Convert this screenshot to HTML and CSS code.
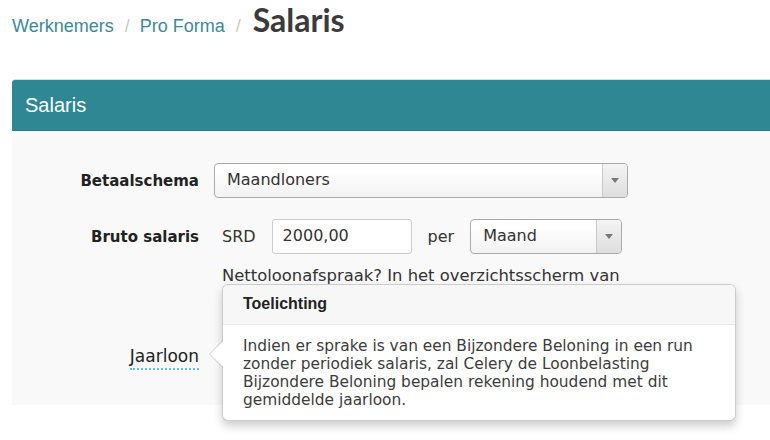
FILE: index.html
```html
<!DOCTYPE html>
<html lang="nl">
<head>
<meta charset="utf-8">
<title>Salaris</title>
<link rel="stylesheet" href="styles.css">
</head>
<body>
<div class="crumbs">
  <a class="crumb" href="#">Werknemers</a>
  <span class="sep">/</span>
  <a class="crumb" href="#">Pro Forma</a>
  <span class="sep">/</span>
  <h1 class="title">Salaris</h1>
</div>

<section class="panel">
  <div class="panel-heading">Salaris</div>
  <div class="panel-body">
    <div class="row">
      <label class="label">Betaalschema</label>
      <div class="controls">
        <div class="select select-wide">
          <span class="select-text">Maandloners</span>
          <span class="select-arrow"><span class="tri"></span></span>
        </div>
      </div>
    </div>
    <div class="row row-salary">
      <label class="label">Bruto salaris</label>
      <div class="controls">
        <span class="unit">SRD</span>
        <div class="input">2000,00</div>
        <span class="per">per</span>
        <div class="select select-small">
          <span class="select-text">Maand</span>
          <span class="select-arrow"><span class="tri"></span></span>
        </div>
      </div>
    </div>
    <div class="row row-help">
      <span class="label"></span>
      <p class="help">Nettoloonafspraak? In het overzichtsscherm van</p>
    </div>
    <div class="row row-year">
      <span class="label"><span class="hint">Jaarloon</span></span>
      <div class="controls"></div>
      <div class="popover">
        <span class="arrow"></span>
        <div class="popover-title">Toelichting</div>
        <div class="popover-content">Indien er sprake is van een Bijzondere Beloning in een run zonder periodiek salaris, zal Celery de Loonbelasting Bijzondere Beloning bepalen rekening houdend met dit gemiddelde jaarloon.</div>
      </div>
    </div>
  </div>
</section>
</body>
</html>
```

FILE: styles.css
```css
html, body {
  margin: 0;
  padding: 0;
  background: #fff;
}
body {
  font-family: "DejaVu Sans", Verdana, sans-serif;
  font-size: 16px;
  color: #333;
  min-height: 440px;
}

.crumbs {
  display: flex;
  align-items: baseline;
  padding: 0 0 0 12px;
  height: 79px;
  box-sizing: border-box;
}
.crumb {
  font-family: "Liberation Sans", Arial, sans-serif;
  font-size: 18px;
  color: #3a8a99;
  text-decoration: none;
}
.sep {
  font-family: "Liberation Sans", Arial, sans-serif;
  font-size: 18px;
  color: #c8c8c8;
  margin: 0 10px 0 11px;
}
.title {
  margin: 0 0 0 2px;
  font-family: Lato, "Open Sans", sans-serif;
  font-weight: 700;
  font-size: 32px;
  line-height: normal;
  color: #3b3b3b;
}

.panel {
  margin-left: 12px;
  border-top: 1px solid #dcdcdc;
  border-radius: 4px 0 0 0;
}
.panel-heading {
  background: #2e8793;
  color: #fff;
  font-family: "Liberation Sans", Arial, sans-serif;
  font-size: 20px;
  height: 50px;
  line-height: 50px;
  padding-left: 13px;
  border-radius: 3px 0 0 0;
  border-bottom: 1px solid #2a7984;
}
.panel-body {
  background: #f9f9f9;
  padding: 32px 0 0 0;
  height: 242px;
}

.row {
  display: grid;
  grid-template-columns: 187px 1fr;
  column-gap: 15px;
  align-items: center;
  position: relative;
}
.row-salary {
  margin-top: 21px;
}
.label {
  text-align: right;
  font-weight: 700;
  font-size: 15px;
  color: #222;
}
.controls {
  display: flex;
  align-items: center;
}

.select {
  display: flex;
  height: 35px;
  box-sizing: border-box;
  border: 1px solid #aaa;
  border-radius: 4px;
  background: linear-gradient(#fff 20%, #fafafa 50%, #f2f2f2 100%);
  overflow: hidden;
}
.select-wide { width: 414px; }
.select-small { width: 152px; }
.select-text {
  flex: 1;
  padding-left: 12px;
  line-height: 32px;
  color: #333;
}
.select-arrow {
  width: 24px;
  border-left: 1px solid #c8c8c8;
  background: linear-gradient(#f4f4f4, #dedede);
  display: flex;
  align-items: center;
  justify-content: center;
}
.tri {
  width: 0;
  height: 0;
  border-left: 4px solid transparent;
  border-right: 4px solid transparent;
  border-top: 5px solid #777;
}

.unit {
  margin-left: 8px;
  margin-right: 16px;
}
.input {
  width: 140px;
  height: 35px;
  box-sizing: border-box;
  border: 1px solid #ccc;
  border-radius: 3px;
  background: #fff;
  padding-left: 10px;
  line-height: 32px;
}
.per {
  margin-left: 16px;
  margin-right: 16px;
}

.row-help {
  margin-top: 12px;
}
.help {
  margin: 0 0 0 8px;
  font-size: 16.4px;
  line-height: 20px;
  color: #333;
}

.row-year {
  margin-top: 60px;
}
.hint {
  font-weight: 400;
  font-size: 17px;
  line-height: 20px;
  color: #222;
  border-bottom: 2px dotted #5fc4c8;
  padding-bottom: 2px;
}

.popover {
  position: absolute;
  left: 210px;
  top: -62px;
  width: 514px;
  height: 137px;
  box-sizing: border-box;
  background: #fff;
  border: 1px solid rgba(0, 0, 0, 0.2);
  border-radius: 6px;
  box-shadow: 0 5px 10px rgba(0, 0, 0, 0.2);
  z-index: 2;
}
.popover-title {
  font-family: "Liberation Sans", Arial, sans-serif;
  font-weight: 700;
  font-size: 16px;
  color: #222;
  background: #f7f7f7;
  border-bottom: 1px solid #ebebeb;
  border-radius: 5px 5px 0 0;
  height: 39px;
  line-height: 38px;
  padding-left: 20px;
}
.popover-content {
  padding: 12px 20px 0 20px;
  font-size: 15.4px;
  line-height: 18px;
  color: #3c3c3c;
}
.arrow {
  position: absolute;
  left: -14px;
  top: 55px;
  width: 0;
  height: 0;
  border-top: 14px solid transparent;
  border-bottom: 14px solid transparent;
  border-right: 14px solid rgba(0, 0, 0, 0.18);
}
.arrow::after {
  content: "";
  position: absolute;
  left: 1px;
  top: -13px;
  width: 0;
  height: 0;
  border-top: 13px solid transparent;
  border-bottom: 13px solid transparent;
  border-right: 13px solid #fff;
}
```
